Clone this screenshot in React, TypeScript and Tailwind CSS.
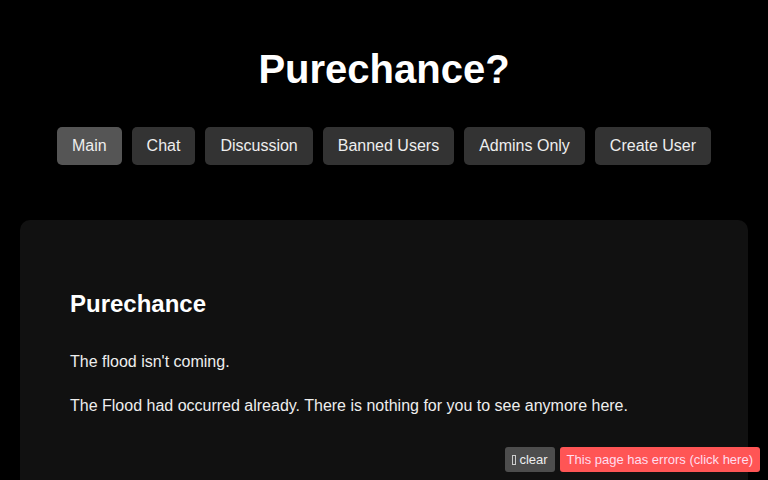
const tabs = ["Main", "Chat", "Discussion", "Banned Users", "Admins Only", "Create User"];

function App() {
  const active = "Main";

  return (
    <div
      className="min-h-[480px] bg-black text-white px-[20px] pt-[46px] leading-[1.15]"
      style={{ fontFamily: '"Liberation Sans", Arial, sans-serif' }}
    >
      <h1 className="text-center text-[40px] font-bold">Purechance?</h1>

      <nav className="mt-[35px] flex justify-center gap-[10px]">
        {tabs.map((t) => (
          <button
            key={t}
            className={
              "rounded-[5px] px-[15px] py-[10px] text-[16px] leading-[18px] text-[#eee] " +
              (t === active ? "bg-[#555]" : "bg-[#333]")
            }
          >
            {t}
          </button>
        ))}
      </nav>

      <main className="mt-[55px] rounded-[10px] bg-[#111] px-[50px] pt-[70px] pb-[100px]">
        <h2 className="text-[24px] font-bold">Purechance</h2>
        <p className="mt-[35px] text-[16px] text-[#eee]">The flood isn't coming.</p>
        <p className="mt-[26px] text-[16px] text-[#eee]">
          The Flood had occurred already. There is nothing for you to see anymore here.
        </p>
      </main>

      {/* error overlay */}
      <div className="fixed bottom-[8px] right-[8px] flex gap-[5px] text-[13px] leading-[15px]">
        <button className="flex items-center gap-[3px] rounded-[3px] bg-[#4d4d4d] px-[7px] py-[5px] text-[#eee]">
          <span className="inline-block h-[10px] w-[4px] border border-[#ccc]" />
          clear
        </button>
        <button className="rounded-[3px] bg-[#f55] px-[7px] py-[5px] text-[#fde]">
          This page has errors (click here)
        </button>
      </div>
    </div>
  );
}

export default App;
